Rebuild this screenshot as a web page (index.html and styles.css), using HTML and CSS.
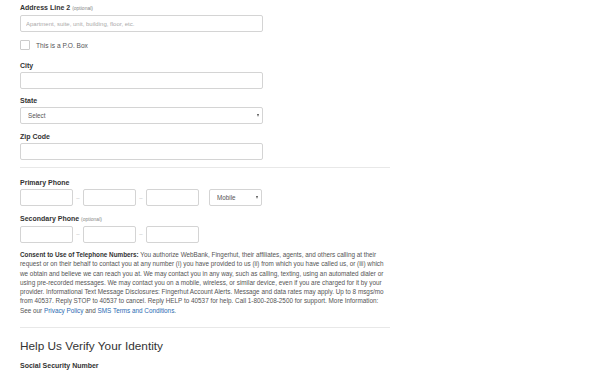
FILE: index.html
```html
<!DOCTYPE html>
<html lang="en">
<head>
    <meta charset="UTF-8">
    <meta name="viewport" content="width=device-width, initial-scale=1.0">
    <title>Address and Phone</title>
    <link rel="stylesheet" href="styles.css">
</head>
<body>
    <div class="form-wrap">
        <div class="field">
            <label class="field-label">Address Line 2 <span class="optional">(optional)</span></label>
            <input type="text" class="text-input" placeholder="Apartment, suite, unit, building, floor, etc.">
        </div>

        <label class="check-row">
            <span class="check-box"></span>
            <span class="check-text">This is a P.O. Box</span>
        </label>

        <div class="field">
            <label class="field-label">City</label>
            <input type="text" class="text-input">
        </div>

        <div class="field">
            <label class="field-label">State</label>
            <div class="select-wrap">
                <select class="select-input">
                    <option>Select</option>
                </select>
            </div>
        </div>

        <div class="field">
            <label class="field-label">Zip Code</label>
            <input type="text" class="text-input">
        </div>

        <hr class="divider divider-top">

        <div class="field">
            <label class="field-label">Primary Phone</label>
            <div class="phone-row">
                <input type="text" class="text-input phone-input">
                <span class="dash">&ndash;</span>
                <input type="text" class="text-input phone-input">
                <span class="dash">&ndash;</span>
                <input type="text" class="text-input phone-input">
                <div class="select-wrap phone-type">
                    <select class="select-input">
                        <option>Mobile</option>
                    </select>
                </div>
            </div>
        </div>

        <div class="field">
            <label class="field-label">Secondary Phone <span class="optional">(optional)</span></label>
            <div class="phone-row">
                <input type="text" class="text-input phone-input">
                <span class="dash">&ndash;</span>
                <input type="text" class="text-input phone-input">
                <span class="dash">&ndash;</span>
                <input type="text" class="text-input phone-input">
            </div>
        </div>

        <p class="consent">
            <strong>Consent to Use of Telephone Numbers:</strong> You authorize WebBank, Fingerhut, their affiliates, agents, and others calling at their request or on their behalf to contact you at any number (i) you have provided to us (ii) from which you have called us, or (iii) which we obtain and believe we can reach you at. We may contact you in any way, such as calling, texting, using an automated dialer or using pre-recorded messages. We may contact you on a mobile, wireless, or similar device, even if you are charged for it by your provider. Informational Text Message Disclosures: Fingerhut Account Alerts. Message and data rates may apply. Up to 8 msgs/mo from 40537. Reply STOP to 40537 to cancel. Reply HELP to 40537 for help. Call 1-800-208-2500 for support. More Information: See our <a href="#">Privacy Policy</a> and <a href="#">SMS Terms and Conditions</a>.
        </p>

        <hr class="divider divider-bottom">

        <h2 class="section-title">Help Us Verify Your Identity</h2>
        <label class="field-label">Social Security Number</label>
    </div>
</body>
</html>
```

FILE: styles.css
```css
/* General Styles */
body {
    margin: 0;
    font-family: 'Liberation Sans', Arial, sans-serif;
    background-color: #fff;
    color: #555;
}

.form-wrap {
    width: 370px;
    padding: 3px 0 0 20px;
}

.field {
    margin-bottom: 7.5px;
}

.field-label {
    display: block;
    font-size: 7px;
    line-height: 9px;
    font-weight: bold;
    color: #333;
    margin-bottom: 2px;
}

.optional {
    font-size: 5px;
    font-weight: normal;
    color: #888;
}

.text-input {
    box-sizing: border-box;
    display: block;
    width: 243px;
    height: 17px;
    margin: 0;
    padding: 0 5px;
    border: 1px solid #d4d4d4;
    border-radius: 2px;
    font-family: inherit;
    font-size: 6px;
    color: #555;
    background: #fff;
}

.text-input::placeholder {
    color: #aaa;
}

/* Checkbox */
.check-row {
    display: flex;
    align-items: center;
    height: 11px;
    margin: 1px 0 10px;
}

.check-box {
    box-sizing: border-box;
    width: 10px;
    height: 10px;
    border: 1px solid #ccc;
    border-radius: 1px;
    margin-right: 6px;
}

.check-text {
    font-size: 6.6px;
    color: #555;
}

/* Select */
.select-wrap {
    position: relative;
    width: 243px;
}

.select-input {
    box-sizing: border-box;
    display: block;
    width: 100%;
    height: 17px;
    margin: 0;
    padding: 0 7px;
    border: 1px solid #d4d4d4;
    border-radius: 2px;
    background: #fff;
    font-family: inherit;
    font-size: 6.3px;
    color: #555;
    appearance: none;
    -webkit-appearance: none;
}

.select-wrap::after {
    content: "";
    position: absolute;
    right: 4px;
    top: 7px;
    border-left: 1.5px solid transparent;
    border-right: 1.5px solid transparent;
    border-top: 3px solid #555;
}

/* Phone */
.phone-row {
    display: flex;
    align-items: center;
}

.phone-input {
    width: 53px;
}

.dash {
    width: 10px;
    text-align: center;
    font-size: 6px;
    color: #bbb;
}

.phone-type {
    width: 53px;
    margin-left: 10px;
}

/* Dividers */
.divider {
    border: none;
    border-top: 1px solid #e8e8e8;
    margin: 0;
}

.divider-top {
    margin: 0 0 10px;
}

.divider-bottom {
    margin: 0 0 10px;
}

/* Consent */
.consent {
    margin: 2px 0 12px;
    width: 370px;
    font-size: 6.35px;
    line-height: 9.3px;
    color: #555;
}

.consent strong {
    color: #333;
}

.consent a {
    color: #2b6cb3;
    text-decoration: none;
}

/* Identity */
.section-title {
    margin: 0 0 7px;
    font-size: 11.8px;
    line-height: 16px;
    font-weight: normal;
    color: #333;
}
```
